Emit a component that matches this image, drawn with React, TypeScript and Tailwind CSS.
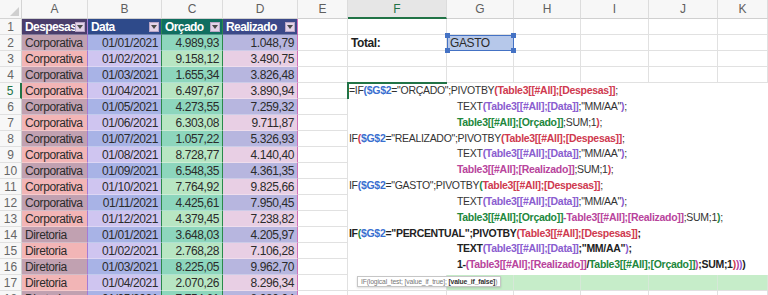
import React from "react";

const CELL = "font-['Liberation_Sans',sans-serif] text-[12px] tracking-[-0.4px]";

const data = [
  ["Corporativa", "01/01/2021", "4.989,93", "1.048,79"],
  ["Corporativa", "01/02/2021", "9.158,12", "3.490,75"],
  ["Corporativa", "01/03/2021", "1.655,34", "3.826,48"],
  ["Corporativa", "01/04/2021", "6.497,67", "3.890,94"],
  ["Corporativa", "01/05/2021", "4.273,55", "7.259,32"],
  ["Corporativa", "01/06/2021", "6.303,08", "9.711,87"],
  ["Corporativa", "01/07/2021", "1.057,22", "5.326,93"],
  ["Corporativa", "01/08/2021", "8.728,77", "4.140,40"],
  ["Corporativa", "01/09/2021", "6.548,35", "4.361,35"],
  ["Corporativa", "01/10/2021", "7.764,92", "9.825,66"],
  ["Corporativa", "01/11/2021", "4.425,61", "7.950,45"],
  ["Corporativa", "01/12/2021", "4.379,45", "7.238,82"],
  ["Diretoria", "01/01/2021", "3.648,03", "4.205,97"],
  ["Diretoria", "01/02/2021", "2.768,28", "7.106,28"],
  ["Diretoria", "01/03/2021", "8.225,05", "9.962,70"],
  ["Diretoria", "01/04/2021", "2.070,26", "8.296,34"],
  ["Diretoria", "01/05/2021", "7.754,61", "8.080,04"],
];

const tableCols = [
  { head: "Despesas", hd: "bg-[#4a3e6c]", dark: "bg-[#c1a1b1]", light: "bg-[#f2b5b6]", edge: "border-r-[#a57bd6]", right: false },
  { head: "Data", hd: "bg-[#2e4a8a]", dark: "bg-[#a8b3e6]", light: "bg-[#cfc5f0]", edge: "border-r-[#2a8a4a]", right: true },
  { head: "Orçado", hd: "bg-[#106e60]", dark: "bg-[#8dd6bd]", light: "bg-[#b8e6c3]", edge: "border-r-[#2a8a4a]", right: true },
  { head: "Realizado", hd: "bg-[#3b4989]", dark: "bg-[#b7b6df]", light: "bg-[#e8cfe4]", edge: "border-r-[#d070b8]", right: true },
];

const letters = ["A", "B", "C", "D", "E", "F", "G", "H", "I", "J", "K"];

const k = "text-[#333]";
const kb = "text-[#222] font-bold";
const B = "font-bold text-[#3a6fd0]";
const R = "font-bold text-[#cf3a4f]";
const P = "font-bold text-[#8a5dcf]";
const G = "font-bold text-[#21873c]";
const M = "font-bold text-[#b8449c]";

type Seg = [string, string];
type Line = { indent?: boolean; segs: Seg[] };

const textLine = (bold: boolean): Line => ({
  indent: true,
  segs: [
    ["TEXT", bold ? kb : k],
    ["(", P],
    ["Table3[[#All];[Data]]", P],
    [';"MM/AA"', bold ? kb : k],
    [")", P],
    [";", bold ? kb : k],
  ],
});

const formula: Line[] = [
  { segs: [["=IF", k], ["(", B], ["$G$2", B], ['="ORÇADO";PIVOTBY', k], ["(", R], ["Table3[[#All];[Despesas]]", R], [";", k]] },
  textLine(false),
  { indent: true, segs: [["Table3[[#All];[Orçado]]", G], [";SUM;1", k], [")", R], [";", k]] },
  { segs: [["IF", k], ["(", R], ["$G$2", B], ['="REALIZADO";PIVOTBY', k], ["(", R], ["Table3[[#All];[Despesas]]", R], [";", k]] },
  textLine(false),
  { indent: true, segs: [["Table3[[#All];[Realizado]]", M], [";SUM;1", k], [")", R], [";", k]] },
  { segs: [["IF", k], ["(", B], ["$G$2", B], ['="GASTO";PIVOTBY', k], ["(", G], ["Table3[[#All];[Despesas]]", R], [";", k]] },
  textLine(false),
  { indent: true, segs: [["Table3[[#All];[Orçado]]", G], ["-", M], ["Table3[[#All];[Realizado]]", M], [";SUM;1", k], [")", G], [";", k]] },
  { segs: [["IF", kb], ["(", G], ["$G$2", B], ['="PERCENTUAL";PIVOTBY', kb], ["(", R], ["Table3[[#All];[Despesas]]", R], [";", kb]] },
  textLine(true),
  {
    indent: true,
    segs: [
      ["1-", kb],
      ["(", M],
      ["Table3[[#All];[Realizado]]", M],
      ["/", kb],
      ["Table3[[#All];[Orçado]]", G],
      [")", M],
      [";SUM;1", kb],
      [")", R],
      [")", M],
      [")", P],
      [")", kb],
    ],
  },
];

const FilterBtn = () => (
  <span className="absolute right-[2px] top-[3px] flex h-[10px] w-[10px] items-center justify-center border border-[#b9a6c6] bg-[#e3d3e8]">
    <svg width="6" height="4" viewBox="0 0 6 4">
      <path d="M0 0h6L3 4z" fill="#4a4a4a" />
    </svg>
  </span>
);

const SelHandle = ({ pos }: { pos: string }) => (
  <span className={`absolute h-[5px] w-[5px] bg-[#4472c4] ${pos}`} />
);

export default function App() {
  const cells: React.ReactNode[] = [];

  // column header row
  cells.push(
    <div key="corner" className="relative border-b border-r border-[#d4d4d4] bg-[#f7f7f7]">
      <span className="absolute bottom-[2px] right-[2px] h-0 w-0 border-b-[9px] border-l-[9px] border-b-[#cfcfcf] border-l-transparent" />
    </div>,
  );
  letters.forEach((l) =>
    cells.push(
      <div
        key={"h" + l}
        className={
          "flex items-center justify-center border-r border-[#dcdcdc] font-['Liberation_Sans',sans-serif] text-[12px] " +
          (l === "F"
            ? "border-b-2 border-b-[#217346] bg-[#e6e6e6] text-[#217346]"
            : "border-b border-b-[#d0d0d0] bg-[#f7f7f7] text-[#5f5f5f]")
        }
      >
        {l}
      </div>,
    ),
  );

  for (let r = 1; r <= 18; r++) {
    cells.push(
      <div
        key={"r" + r}
        className={
          "flex items-center justify-center border-b border-[#e0e0e0] bg-[#f7f7f7] font-['Liberation_Sans',sans-serif] text-[12px] " +
          (r === 5 ? "border-r-2 border-r-[#217346] text-[#217346]" : "border-r border-r-[#d0d0d0] text-[#666]")
        }
      >
        {r}
      </div>,
    );

    tableCols.forEach((c, i) => {
      if (r === 1) {
        cells.push(
          <div
            key={"t" + r + i}
            className={`relative border-r ${c.edge} border-b border-b-white/30 ${c.hd} font-['Liberation_Sans',sans-serif] text-[12px] tracking-[-0.6px] pl-[3px] font-bold leading-[16px] text-white`}
          >
            {c.head}
            <FilterBtn />
          </div>,
        );
      } else {
        const row = data[r - 2];
        cells.push(
          <div
            key={"t" + r + i}
            className={`overflow-hidden whitespace-nowrap border-r ${c.edge} border-b border-b-white/30 ${r % 2 === 0 ? c.dark : c.light} ${CELL} px-[3px] leading-[16px] text-[#2b2b2b] ${c.right ? "text-right" : "text-left"}`}
          >
            {row[i]}
          </div>,
        );
      }
    });

    // column E
    cells.push(<div key={"e" + r} className="border-b border-r border-[#e1e1e1]" />);

    // columns F..K, rows 5-16 sit under the formula box
    if (r >= 5 && r <= 16) continue;
    for (let c = 0; c < 6; c++) {
      const key = "c" + r + c;
      if (r === 2 && c === 0) {
        cells.push(
          <div key={key} className={`border-b border-r border-[#e1e1e1] ${CELL} pl-[3px] font-bold leading-[16px] text-[#1f1f1f]`}>
            Total:
          </div>,
        );
      } else if (r === 2 && c === 1) {
        cells.push(
          <div
            key={key}
            className={`relative border border-[#4472c4] bg-[#b6c8ea] ${CELL} pl-[2px] leading-[14px] text-[#2b2b2b]`}
          >
            GASTO
            <SelHandle pos="-left-[3px] -top-[3px]" />
            <SelHandle pos="-right-[3px] -top-[3px]" />
            <SelHandle pos="-bottom-[3px] -left-[3px]" />
            <SelHandle pos="-bottom-[3px] -right-[3px]" />
          </div>,
        );
      } else if (r === 17 && c === 0) {
        cells.push(
          <div key={key} className="relative border-b border-r border-[#e1e1e1]">
            <div className="absolute left-[9px] top-[1px] z-10 whitespace-nowrap border border-[#c6c6c6] bg-white px-[3px] font-['Liberation_Sans',sans-serif] text-[6.8px] leading-[9px] tracking-[-0.15px] text-[#777] shadow-[0_1px_2px_rgba(0,0,0,0.15)]">
              IF(logical_test; [value_if_true]; <span className="font-bold text-[#333]">[value_if_false]</span>)
            </div>
          </div>,
        );
      } else {
        cells.push(
          <div
            key={key}
            className={`border-b border-r border-[#e1e1e1] ${r === 17 ? "border-r-[#d6e8d8] bg-[#c6edc9]" : ""}`}
          />,
        );
      }
    }
  }

  return (
    <div className="h-[295px] w-[768px] overflow-hidden bg-white">
      <div className="grid grid-cols-[22px_66px_74px_61px_75px_50px_99px_67px_67px_68px_69px_1fr] grid-rows-[19px_repeat(18,16px)]">
        <div className="relative col-start-7 col-end-13 row-start-6 row-end-18 h-[190px] bg-white">
          <span className="absolute -left-[1px] -top-[1px] h-[2px] w-[100px] bg-[#217346]" />
          <span className="absolute -left-[1px] -top-[1px] h-[17px] w-[2px] bg-[#217346]" />
          <div className="relative whitespace-nowrap pl-[1px] font-['Liberation_Sans',sans-serif] text-[10.5px] leading-[15.85px] tracking-[-0.3px]">
            {formula.map((line, i) => (
              <div key={i} className={line.indent ? "pl-[108px]" : ""}>
                {line.segs.map(([t, cls], j) => (
                  <span key={j} className={cls}>
                    {t}
                  </span>
                ))}
              </div>
            ))}
          </div>
        </div>
        {cells}
      </div>
    </div>
  );
}
